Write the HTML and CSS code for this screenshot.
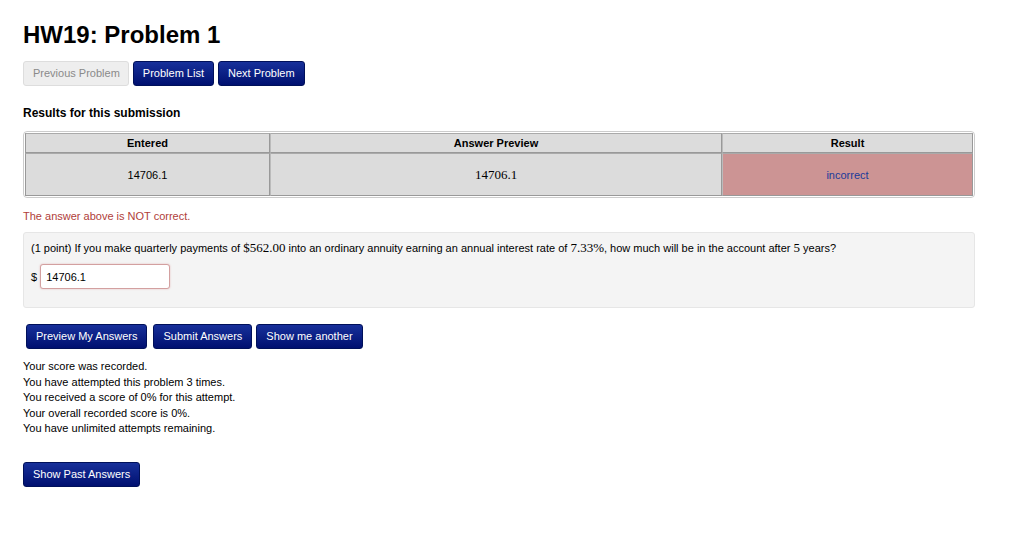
FILE: index.html
```html
<!DOCTYPE html>
<html lang="en">
<head>
  <meta charset="UTF-8">
  <title>HW19: Problem 1</title>
  <link rel="stylesheet" href="styles.css">
</head>
<body>
  <!-- Заголовок -->
  <h1>HW19: Problem 1</h1>

  <!-- Навигация -->
  <div class="nav">
    <span class="btn disabled">Previous Problem</span>
    <a class="btn" href="#">Problem List</a>
    <a class="btn" href="#">Next Problem</a>
  </div>

  <!-- Результаты -->
  <h3>Results for this submission</h3>
  <div class="results">
    <table>
      <tr>
        <th class="col-entered">Entered</th>
        <th class="col-preview">Answer Preview</th>
        <th>Result</th>
      </tr>
      <tr>
        <td>14706.1</td>
        <td class="math">14706.1</td>
        <td class="incorrect">incorrect</td>
      </tr>
    </table>
  </div>
  <p class="wrong">The answer above is NOT correct.</p>

  <!-- Задача -->
  <div class="problem">
    <p>(1 point) If you make quarterly payments of <span class="math">$562.00</span> into an ordinary annuity earning an annual interest rate of <span class="math">7.33%</span>, how much will be in the account after <span class="math">5</span> years?</p>
    <label class="answer">$ <input type="text" value="14706.1"></label>
  </div>

  <!-- Кнопки -->
  <div class="submit-row">
    <button>Preview My Answers</button>
    <button>Submit Answers</button>
    <button>Show me another</button>
  </div>

  <div class="score">
    Your score was recorded.<br>
    You have attempted this problem 3 times.<br>
    You received a score of 0% for this attempt.<br>
    Your overall recorded score is 0%.<br>
    You have unlimited attempts remaining.
  </div>

  <button class="past">Show Past Answers</button>
</body>
</html>
```

FILE: styles.css
```css
/* Общие стили */
body {
  font-family: "Liberation Sans", Arial, sans-serif;
  font-size: 11px;
  color: #000;
  background: #fff;
  margin: 0;
  padding: 16px 49px 0 23px;
}

h1 {
  font-size: 24px;
  font-weight: bold;
  margin: 4px 0 0;
  line-height: 29px;
}

/* Навигация */
.nav {
  display: flex;
  gap: 4px;
  margin-top: 12px;
}

.btn, button {
  display: inline-block;
  font-family: "Liberation Sans", Arial, sans-serif;
  font-size: 11px;
  line-height: 13px;
  padding: 5px 9px;
  color: #fff;
  text-decoration: none;
  background: linear-gradient(#17309a, #001070);
  border: 1px solid #00105a;
  border-radius: 3px;
  cursor: pointer;
}

.nav .btn:first-child {
  padding: 5px 8px 5px 9px;
}

.btn.disabled {
  color: #8a8a8a;
  background: #eee;
  border-color: #ddd;
}

h3 {
  font-size: 12px;
  margin: 20px 0 11px;
  line-height: 14px;
}

/* Таблица результатов */
.results {
  border: 1px solid #ccc;
  border-radius: 4px;
  padding: 1px;
}

table {
  width: 100%;
  border-collapse: separate;
  border-spacing: 0;
  background: #dcdcdc;
}

th, td {
  text-align: center;
  border: 1px solid #999;
  border-top-color: #aaa;
}

th {
  font-size: 11px;
  height: 18px;
  padding: 0;
}

td {
  height: 41px;
  padding: 0;
}

th + th, td + td {
  border-left: 1px solid #bbb;
}

.col-entered { width: 243px; }
.col-preview { width: 450px; }

.math {
  font-family: "Liberation Serif", "Times New Roman", serif;
  font-size: 13px;
}

.incorrect {
  background: #cc9494;
  color: #1a3a9a;
}

.wrong {
  color: #b0403a;
  margin: 12px 0 10px;
}

/* Блок задачи */
.problem {
  background: #f4f4f4;
  border: 1px solid #e6e6e6;
  border-radius: 3px;
  padding: 8px 7px 18px;
}

.problem p {
  margin: 0 0 9px;
  line-height: 13px;
}

.answer input {
  font-family: "Liberation Sans", Arial, sans-serif;
  font-size: 11px;
  width: 130px;
  height: 25px;
  padding: 2px 5px;
  margin: 0;
  border: 1px solid #d3a0a0;
  border-radius: 3px;
  box-shadow: 0 0 2px #e4b7b7;
  background: #fff;
  box-sizing: border-box;
}

.submit-row {
  display: flex;
  gap: 4px;
  margin: 16px 0 0 3px;
}

.submit-row button:first-child {
  margin-right: 2px;
}

.score {
  margin-top: 10px;
  line-height: 15.5px;
}

.past {
  margin-top: 25px;
  padding: 5px 9px;
}
```
